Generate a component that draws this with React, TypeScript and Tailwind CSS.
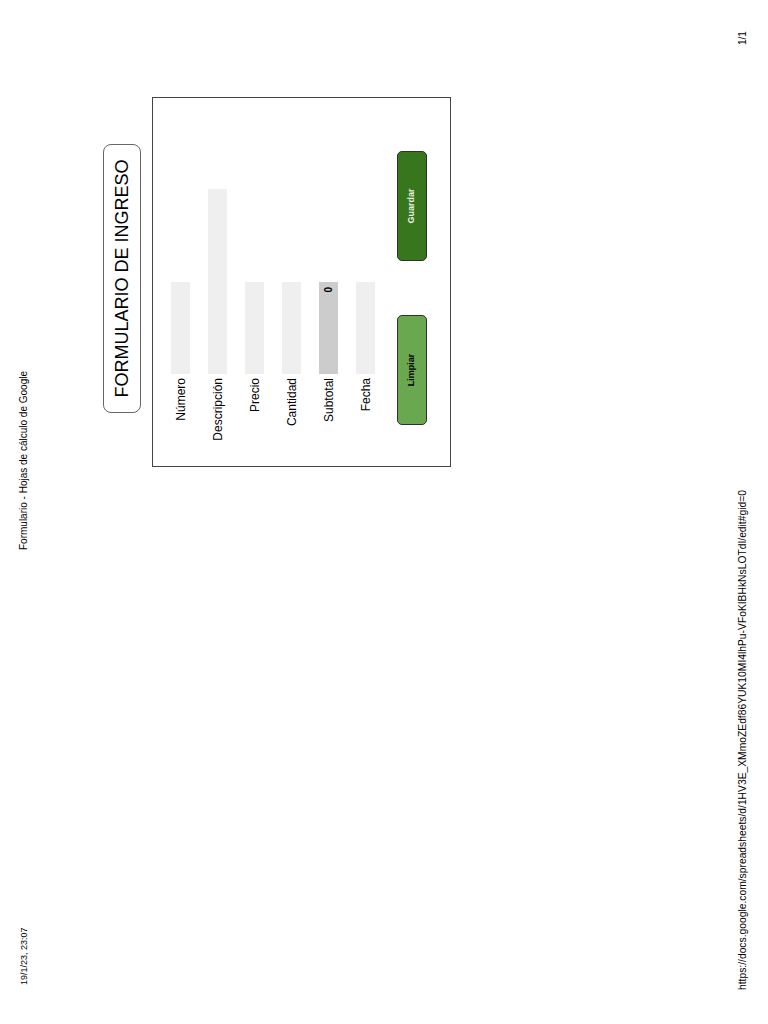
import React from "react";

const rows = [
  { label: "Número", w: "w-[92px]", bg: "bg-[#efefef]", value: "" },
  { label: "Descripción", w: "w-[185px]", bg: "bg-[#efefef]", value: "" },
  { label: "Precio", w: "w-[92px]", bg: "bg-[#efefef]", value: "" },
  { label: "Cantidad", w: "w-[92px]", bg: "bg-[#efefef]", value: "" },
  { label: "Subtotal", w: "w-[92px]", bg: "bg-[#cccccc]", value: "0" },
  { label: "Fecha", w: "w-[92px]", bg: "bg-[#efefef]", value: "" },
];

export default function App() {
  return (
    <div className="relative w-[768px] h-[1024px] overflow-hidden bg-white">
      <div
        className="absolute top-0 left-0 w-[1024px] h-[768px] origin-top-left [transform:translateY(1024px)_rotate(-90deg)] flex flex-col text-black"
        style={{ fontFamily: '"Liberation Sans", Arial, sans-serif' }}
      >
        {/* print header */}
        <div className="h-[30px] pt-[18px] flex items-start text-[10px] leading-[12px]">
          <span className="ml-[39px] w-[435px] text-[9px] leading-[12px]">19/1/23, 23:07</span>
          <span>Formulario - Hojas de cálculo de Google</span>
        </div>

        {/* content */}
        <div className="flex-1 ml-[557px] mt-[73px] flex flex-col">
          <div className="ml-[54px] w-[269px] h-[38px] border border-[#666] rounded-[8px] flex items-center justify-center text-[18px]">
            FORMULARIO DE INGRESO
          </div>
          <div className="mt-[11px] w-[370px] h-[299px] border border-[#444] flex flex-col pt-[18px]">
            <div className="flex flex-col gap-[18px]">
              {rows.map((r) => (
                <div key={r.label} className="h-[19px] flex items-center">
                  <span className="w-[88px] text-right text-[12px] leading-[14px]">{r.label}</span>
                  <div
                    className={`ml-[4px] h-[19px] ${r.w} ${r.bg} flex items-center justify-end pr-[5px] text-[10px] font-bold`}
                  >
                    {r.value}
                  </div>
                </div>
              ))}
            </div>
            <div className="mt-[22px] flex">
              <div className="ml-[41px] w-[110px] h-[30px] rounded-[5px] border border-[#2f2f2f] bg-[#6aa84f] flex items-center justify-center text-[9px] font-bold text-black">
                Limpiar
              </div>
              <div className="ml-[54px] w-[110px] h-[30px] rounded-[5px] border border-[#2f2f2f] bg-[#38761d] flex items-center justify-center text-[9px] font-bold text-[#e6efe0]">
                Guardar
              </div>
            </div>
          </div>
        </div>

        {/* print footer */}
        <div className="h-[31px] flex items-start text-[10.3px] leading-[12px]">
          <span className="ml-[34px] w-[945px]">
            https://docs.google.com/spreadsheets/d/1HV3E_XMmoZEdf86YUK10MI4lhPu-VFoKIBHkNsLOTdI/edit#gid=0
          </span>
          <span className="text-[10px]">1/1</span>
        </div>
      </div>
    </div>
  );
}
